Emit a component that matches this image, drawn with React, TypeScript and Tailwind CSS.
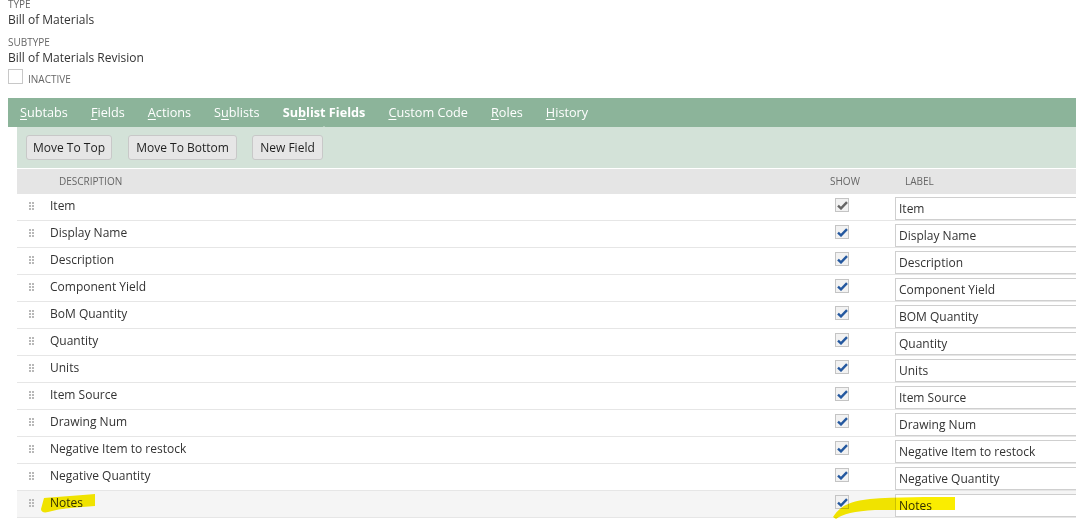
import React from "react";

const tabs = [
  { pre: "", key: "S", post: "ubtabs" },
  { pre: "", key: "F", post: "ields" },
  { pre: "", key: "A", post: "ctions" },
  { pre: "S", key: "u", post: "blists" },
  { pre: "Su", key: "b", post: "list Fields", active: true },
  { pre: "", key: "C", post: "ustom Code" },
  { pre: "", key: "R", post: "oles" },
  { pre: "", key: "H", post: "istory" },
];

const rows = [
  { desc: "Item", label: "Item", locked: true },
  { desc: "Display Name", label: "Display Name" },
  { desc: "Description", label: "Description" },
  { desc: "Component Yield", label: "Component Yield" },
  { desc: "BoM Quantity", label: "BOM Quantity" },
  { desc: "Quantity", label: "Quantity" },
  { desc: "Units", label: "Units" },
  { desc: "Item Source", label: "Item Source" },
  { desc: "Drawing Num", label: "Drawing Num" },
  { desc: "Negative Item to restock", label: "Negative Item to restock" },
  { desc: "Negative Quantity", label: "Negative Quantity" },
  { desc: "Notes", label: "Notes", hover: true },
];

function Handle() {
  return (
    <div className="grid h-[8px] w-[5px] grid-cols-2 gap-[1px]">
      {Array.from({ length: 6 }).map((_, i) => (
        <span key={i} className="block h-[2px] w-[2px] bg-[#b8b8b8]" />
      ))}
    </div>
  );
}

function Check({ locked }: { locked?: boolean }) {
  return (
    <div className="flex h-[14px] w-[14px] items-center justify-center border border-[#c4c4c4] bg-[#f2f2f2]">
      <svg width="11" height="9" viewBox="0 0 11 9">
        <path
          d="M1 4.6 L4 7.4 L10 1.2"
          fill="none"
          stroke={locked ? "#666666" : "#24589f"}
          strokeWidth="2.4"
        />
      </svg>
    </div>
  );
}

function Button({ children, className }: { children: React.ReactNode; className: string }) {
  return (
    <button
      className={`h-[25px] rounded-[3px] border border-[#c8c8c8] bg-[#e6e6e6] text-center text-[12px] text-[#1f1f1f] ${className}`}
    >
      {children}
    </button>
  );
}

export default function App() {
  return (
    <div
      className="relative h-[519px] w-[1076px] overflow-hidden bg-white text-[#333]"
      style={{ fontFamily: '"Open Sans", "Liberation Sans", sans-serif' }}
    >
      {/* Record header */}
      <div className="px-2">
        <div className="h-[11px] text-[10px] leading-[9px] text-[#666]">TYPE</div>
        <div className="mt-[1px] text-[12px] leading-[16px]">Bill of Materials</div>
        <div className="mt-[7px] text-[10px] leading-[14px] text-[#666]">SUBTYPE</div>
        <div className="text-[12px] leading-[17px]">Bill of Materials Revision</div>
        <div className="mt-[3px] flex items-end gap-[5px]">
          <span className="block h-[15px] w-[15px] border border-[#c8c8c8] bg-white" />
          <span className="-mb-[1px] text-[10px] leading-[11px] text-[#666]">INACTIVE</span>
        </div>
      </div>

      {/* Tabs */}
      <div className="ml-2 mt-[14px] flex h-[29px] items-center gap-[23px] bg-[#8cb49a] pl-3 text-[12.7px] text-white">
        {tabs.map((t) => (
          <div key={t.post} className={`relative ${t.active ? "font-bold" : ""}`}>
            {t.pre}
            <span className="underline underline-offset-2">{t.key}</span>
            {t.post}
            {t.active && (
              <span className="absolute left-1/2 top-[23px] -ml-[5px] h-0 w-0 border-x-[5px] border-b-[5px] border-x-transparent border-b-[#d3e2d8]" />
            )}
          </div>
        ))}
      </div>

      {/* Sublist */}
      <div className="ml-[17px]">
        <div className="flex h-[42px] items-center border-b border-white bg-[#d3e2d8] pl-[9px]">
          <Button className="w-[86px]">Move To Top</Button>
          <Button className="ml-[16px] w-[109px]">Move To Bottom</Button>
          <Button className="ml-[15px] w-[71px]">New Field</Button>
        </div>

        <div className="grid h-[25px] grid-cols-[33px_770px_75px_1fr] items-center bg-[#e5e5e5] text-[10px] text-[#666]">
          <div />
          <div className="pl-[9px]">DESCRIPTION</div>
          <div className="pl-[10px]">SHOW</div>
          <div className="pl-[10px]">LABEL</div>
        </div>

        {rows.map((r) => (
          <div
            key={r.desc}
            className={`grid h-[27px] grid-cols-[33px_770px_75px_1fr] items-start border-b border-[#e6e6e6] text-[12px] ${
              r.hover ? "bg-[#f5f5f5]" : "bg-white"
            }`}
          >
            <div className="flex items-start justify-end pr-[16px] pt-[8px]">
              <Handle />
            </div>
            <div className="pt-[4px] leading-[16px]">{r.desc}</div>
            <div className="pl-[15px] pt-[4px]">
              <Check locked={r.locked} />
            </div>
            <div className="pt-[3px]">
              <div className="flex h-[23px] w-[240px] items-center border border-[#cfcfcf] bg-white pl-[3px] pt-[1px] text-[12px] text-[#333]">
                {r.label}
              </div>
            </div>
          </div>
        ))}
      </div>

      {/* Highlighter marks */}
      <svg
        className="pointer-events-none absolute left-0 top-0 mix-blend-multiply"
        width="1076"
        height="519"
      >
        <path
          d="M44 498 C60 497 80 495 95 494 L95 506 C80 507 62 508 48 512 C44 513 41 512 41 509 Z"
          fill="#faed00"
        />
        <path
          d="M833 517 C840 506 850 501 870 499 C895 497 930 497 955 497 L955 510 C930 510 900 510 875 510 C855 511 842 514 836 519 Z"
          fill="#faed00"
        />
      </svg>
    </div>
  );
}
